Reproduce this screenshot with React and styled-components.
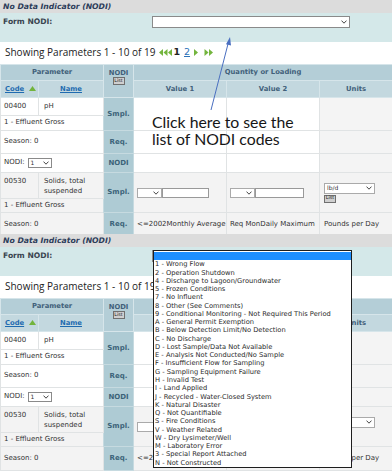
import React from "react";
import styled, { createGlobalStyle } from "styled-components";

const GlobalStyle = createGlobalStyle`
  html, body {
    margin: 0;
    padding: 0;
    background: #fff;
  }
  body {
    font-family: "DejaVu Sans", Verdana, sans-serif;
    color: #333;
  }
`;

const NODI_CODES = [
  "1 - Wrong Flow",
  "2 - Operation Shutdown",
  "4 - Discharge to Lagoon/Groundwater",
  "5 - Frozen Conditions",
  "7 - No Influent",
  "8 - Other (See Comments)",
  "9 - Conditional Monitoring - Not Required This Period",
  "A - General Permit Exemption",
  "B - Below Detection Limit/No Detection",
  "C - No Discharge",
  "D - Lost Sample/Data Not Available",
  "E - Analysis Not Conducted/No Sample",
  "F - Insufficient Flow for Sampling",
  "G - Sampling Equipment Failure",
  "H - Invalid Test",
  "I - Land Applied",
  "J - Recycled - Water-Closed System",
  "K - Natural Disaster",
  "Q - Not Quantifiable",
  "S - Fire Conditions",
  "V - Weather Related",
  "W - Dry Lysimeter/Well",
  "M - Laboratory Error",
  "3 - Special Report Attached",
  "N - Not Constructed",
];

const Frame = styled.div`
  width: 392px;
  height: 471px;
  overflow: hidden;
`;

const Shot = styled.div`
  position: relative;
  height: ${(p) => p.$h}px;
  overflow: hidden;
`;

const TitleBar = styled.div`
  height: 13px;
  background: #dcdcdc;
  padding-left: 3px;
  font: italic bold 7.7px/13px "DejaVu Sans", sans-serif;
  color: #2d3d5a;
`;

const FormRow = styled.div`
  box-sizing: border-box;
  height: 29px;
  background: #d4e8e9;
  display: flex;
  align-items: flex-start;
  padding: 3px 0 0 3px;
`;

const FormLabel = styled.span`
  width: 149px;
  font: bold 7.6px/12px "DejaVu Sans", sans-serif;
  color: #3a4550;
`;

const SelectBox = styled.div`
  box-sizing: border-box;
  width: ${(p) => p.$w}px;
  height: ${(p) => p.$h || 10}px;
  border: 1px solid ${(p) => (p.$light ? "#aaa" : "#8a8a8a")};
  background: #fff;
  display: flex;
  align-items: center;
  justify-content: space-between;
  padding: 0 2px 0 2px;
  font: 6px/1 "DejaVu Sans", sans-serif;
  color: #333;
`;

const Chevron = () => (
  <svg width="6" height="4" viewBox="0 0 6 4">
    <path d="M0.5 0.6 L3 3.2 L5.5 0.6" fill="none" stroke="#444" strokeWidth="1" />
  </svg>
);

const TextBox = styled.div`
  box-sizing: border-box;
  width: ${(p) => p.$w}px;
  height: 10px;
  border: 1px solid #999;
  background: #fff;
`;

const Showing = styled.div`
  height: 20px;
  display: flex;
  align-items: center;
  padding-left: 5px;
  font: 10px/1 "Open Sans", sans-serif;
  color: #222;
`;

const Pager = styled.span`
  display: flex;
  align-items: center;
  margin-left: 4px;
`;

const PageNum = styled.span`
  font-family: "DejaVu Sans", sans-serif;
  font-size: 9.5px;
  line-height: 1;
  font-weight: ${(p) => (p.$current ? 700 : 400)};
  color: ${(p) => (p.$current ? "#222" : "#2d72b8")};
  text-decoration: ${(p) => (p.$current ? "none" : "underline")};
  margin-left: ${(p) => p.$ml || 0}px;
`;

const ArrowIcon = styled.svg`
  margin-left: ${(p) => p.$ml || 0}px;
`;

const Arrows = ({ dir, double, ml }) => (
  <ArrowIcon $ml={ml} width={double ? 9 : 5} height="7" viewBox={double ? "0 0 9 7" : "0 0 5 7"}>
    <g fill="#73b53d" transform={dir === "right" ? `translate(${double ? 9 : 5},0) scale(-1,1)` : undefined}>
      <path d="M0 3.5 L4 0 V7 Z" />
      {double && <path d="M4.5 3.5 L8.5 0 V7 Z" />}
    </g>
  </ArrowIcon>
);

const Table = styled.table`
  width: 392px;
  border-collapse: collapse;
  table-layout: fixed;
  margin-top: 2px;
`;

const HeadRow = styled.tr`
  height: ${(p) => p.$h}px;
  background: ${(p) => (p.$light ? "#c3d8df" : "#b4ced7")};
`;

const Th = styled.th`
  padding: 0 ${(p) => (p.$left ? "4px" : "2px")};
  border: 1px solid #d6e5ea;
  text-align: ${(p) => (p.$left ? "left" : "center")};
  vertical-align: ${(p) => (p.$top ? "top" : "middle")};
  font: bold 6.8px/1.2 "DejaVu Sans", sans-serif;
  color: #41607a;
  background: ${(p) => p.$bg || "transparent"};
  white-space: nowrap;
`;

const SortLink = styled.span`
  color: #1f6bb0;
  text-decoration: underline;
`;

const SortUp = () => (
  <svg width="7" height="5" viewBox="0 0 7 5" style={{ marginLeft: 5 }}>
    <path d="M0 5 L3.5 0 L7 5 Z" fill="#72b43c" />
  </svg>
);

const ListButton = styled.span`
  display: inline-flex;
  align-items: center;
  justify-content: center;
  box-sizing: border-box;
  width: 12px;
  height: 8px;
  border: 1px solid #6f6f6f;
  background: #cfcfcf;
  font: 4.8px/1 "DejaVu Sans", sans-serif;
  color: #222;
`;

const HeadStack = styled.div`
  display: flex;
  flex-direction: column;
  align-items: center;
  padding-top: 4px;
`;

const Row = styled.tr`
  height: ${(p) => p.$h}px;
  background: ${(p) => (p.$shade ? "#f3f3f3" : "#fff")};
`;

const Cell = styled.td`
  border: 1px solid #e0e3e4;
  padding: ${(p) => (p.$top ? "4px" : "0")} 3px 0 ${(p) => p.$pl || 3}px;
  vertical-align: ${(p) => (p.$top ? "top" : "middle")};
  background: ${(p) => (p.$units ? "#f4f4f4" : "transparent")};
  font: 7px/9.6px "DejaVu Sans", sans-serif;
  color: #333;
  white-space: ${(p) => (p.$wrap ? "normal" : "nowrap")};
  overflow: hidden;
`;

const Tag = styled.td`
  border: 1px solid #c6dae0;
  background: #aecbd4;
  text-align: center;
  vertical-align: middle;
  font: bold 7px/1 "DejaVu Sans", sans-serif;
  color: #3c6379;
`;

const Inline = styled.div`
  display: flex;
  align-items: center;
  gap: ${(p) => p.$gap || 0}px;
`;

const Stack = styled.div`
  display: flex;
  flex-direction: column;
  align-items: flex-start;
  gap: 1px;
`;

const Callout = styled.div`
  position: absolute;
  left: 152px;
  top: 113px;
  font: 15.8px/17px Lato, "Open Sans", sans-serif;
  color: #161616;
  white-space: nowrap;
`;

const Pointer = styled.svg`
  position: absolute;
  left: 200px;
  top: 30px;
`;

const DropList = styled.div`
  position: absolute;
  left: 153px;
  top: 16px;
  width: 199px;
  height: 218px;
  box-sizing: border-box;
  border: 1px solid #1e1e1e;
  background: #fff;
  padding-top: 1px;
`;

const Option = styled.div`
  height: 8.28px;
  padding-left: 1px;
  font: 6.7px/8.28px "DejaVu Sans", sans-serif;
  color: #2a2a2a;
  white-space: nowrap;
  overflow: hidden;
  background: ${(p) => (p.$active ? "#1e8fff" : "transparent")};
`;

const Page = () => (
  <>
    <TitleBar>No Data Indicator (NODI)</TitleBar>
    <FormRow>
      <FormLabel>Form NODI:</FormLabel>
      <SelectBox $w={198} $h={12}>
        <span />
        <Chevron />
      </SelectBox>
    </FormRow>
    <Showing>
      Showing Parameters 1 - 10 of 19
      <Pager>
        <Arrows dir="left" double />
        <Arrows dir="left" ml={0} />
        <PageNum $current>1</PageNum>
        <PageNum $ml={4}>2</PageNum>
        <Arrows dir="right" ml={3} />
        <Arrows dir="right" double ml={6} />
      </Pager>
    </Showing>
    <Table>
      <colgroup>
        <col style={{ width: 38 }} />
        <col style={{ width: 65 }} />
        <col style={{ width: 30 }} />
        <col style={{ width: 93 }} />
        <col style={{ width: 93 }} />
        <col style={{ width: 73 }} />
      </colgroup>
      <thead>
        <HeadRow $h={16}>
          <Th colSpan={2}>Parameter</Th>
          <Th rowSpan={2} $top $bg="#b4ced7">
            <HeadStack>
              NODI
              <ListButton>List</ListButton>
            </HeadStack>
          </Th>
          <Th colSpan={3}>Quantity or Loading</Th>
        </HeadRow>
        <HeadRow $h={17} $light>
          <Th $left>
            <SortLink>Code</SortLink>
            <SortUp />
          </Th>
          <Th>
            <SortLink>Name</SortLink>
          </Th>
          <Th>Value 1</Th>
          <Th>Value 2</Th>
          <Th>Units</Th>
        </HeadRow>
      </thead>
      <tbody>
        <Row $h={18}>
          <Cell $top>00400</Cell>
          <Cell $top $pl={5}>pH</Cell>
          <Tag rowSpan={2}>Smpl.</Tag>
          <Cell rowSpan={2} />
          <Cell rowSpan={2} />
          <Cell rowSpan={2} $units />
        </Row>
        <Row $h={15}>
          <Cell colSpan={2}>1 - Effluent Gross</Cell>
        </Row>
        <Row $h={23}>
          <Cell colSpan={2}>Season: 0</Cell>
          <Tag>Req.</Tag>
          <Cell />
          <Cell />
          <Cell $units />
        </Row>
        <Row $h={19}>
          <Cell colSpan={2}>
            <Inline $gap={3}>
              NODI:
              <SelectBox $w={24}>
                1
                <Chevron />
              </SelectBox>
            </Inline>
          </Cell>
          <Tag>NODI</Tag>
          <Cell />
          <Cell />
          <Cell $units />
        </Row>
        <Row $h={26} $shade>
          <Cell $top>00530</Cell>
          <Cell $top $wrap $pl={5}>
            Solids, total suspended
          </Cell>
          <Tag rowSpan={2}>Smpl.</Tag>
          <Cell rowSpan={2}>
            <Inline>
              <SelectBox $w={25} $light>
                <span />
                <Chevron />
              </SelectBox>
              <TextBox $w={47} />
            </Inline>
          </Cell>
          <Cell rowSpan={2}>
            <Inline>
              <SelectBox $w={25} $light>
                <span />
                <Chevron />
              </SelectBox>
              <TextBox $w={49} />
            </Inline>
          </Cell>
          <Cell rowSpan={2} $pl={4}>
            <Stack>
              <SelectBox $w={51} $h={11} $light>
                lb/d
                <Chevron />
              </SelectBox>
              <ListButton>List</ListButton>
            </Stack>
          </Cell>
        </Row>
        <Row $h={14} $shade>
          <Cell colSpan={2}>1 - Effluent Gross</Cell>
        </Row>
        <Row $h={24} $shade>
          <Cell colSpan={2}>Season: 0</Cell>
          <Tag>Req.</Tag>
          <Cell>&lt;=2002Monthly Average</Cell>
          <Cell>Req MonDaily Maximum</Cell>
          <Cell $pl={4}>Pounds per Day</Cell>
        </Row>
      </tbody>
    </Table>
  </>
);

export default function App() {
  return (
    <Frame>
      <GlobalStyle />
      <Shot $h={234}>
        <Page />
        <Pointer width="36" height="84" viewBox="0 0 36 84">
          <line x1="11" y1="80" x2="28.5" y2="12" stroke="#4a6fc0" strokeWidth="1" />
          <path d="M30 7 L31 15.5 L26 14.3 Z" fill="#4a6fc0" />
        </Pointer>
        <Callout>
          Click here to see the
          <br />
          list of NODI codes
        </Callout>
      </Shot>
      <Shot $h={237}>
        <Page />
        <DropList>
          <Option $active />
          {NODI_CODES.map((c) => (
            <Option key={c}>{c}</Option>
          ))}
        </DropList>
      </Shot>
    </Frame>
  );
}
